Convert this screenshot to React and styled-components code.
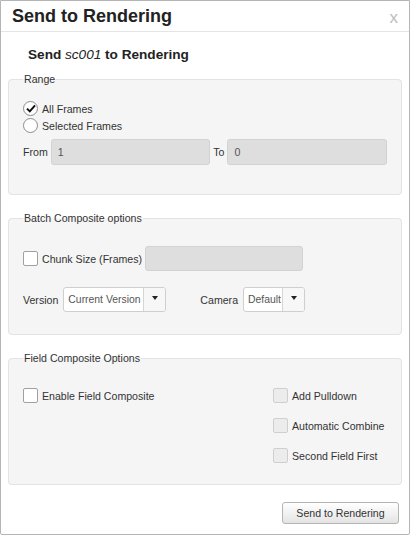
import React from 'react'
import styled, { createGlobalStyle } from 'styled-components'

const Global = createGlobalStyle`
  body {
    margin: 0;
    background: #fff;
    font-family: "Liberation Sans", Arial, sans-serif;
    color: #333;
  }
`

const Dialog = styled.div`
  width: 410px;
  box-sizing: border-box;
  border: 1px solid #b5b5b5;
  border-radius: 0 0 2px 2px;
  background: #fff;
`

const Header = styled.div`
  height: 31px;
  box-sizing: border-box;
  border-bottom: 1px solid #e5e5e5;
  display: flex;
  align-items: center;
  justify-content: space-between;
  padding: 0 11px 0 11px;
`

const Title = styled.h3`
  margin: 0;
  font-size: 18px;
  font-weight: bold;
  color: #222;
`

const Close = styled.span`
  font-size: 17px;
  color: #bdbdbd;
  line-height: 1;
  margin-top: 2px;
`

const Body = styled.div`
  padding: 0 7px 10px;
`

const Subtitle = styled.h4`
  margin: 13px 0 7px;
  padding-left: 20px;
  font-size: 13.6px;
  line-height: 20px;
  font-weight: bold;
  color: #222;

  em {
    font-weight: normal;
  }
`

const Group = styled.fieldset`
  margin: ${(p) => (p.$first ? '0' : '16px')} 0 0;
  padding: ${(p) => p.$pad};
  min-width: 0;
  border: 1px solid #e3e3e3;
  border-radius: 4px;
  background: #f5f5f5;
  font-size: 10.6px;
`

const Legend = styled.legend`
  padding: 0 1px;
  font-size: 10.6px;
  line-height: 14px;
  color: #333;
`

const OptionRow = styled.label`
  display: flex;
  align-items: center;
  gap: 4px;
  height: ${(p) => p.$h || 17}px;
  white-space: nowrap;
`

const RadioMark = styled.span`
  width: 15px;
  height: 15px;
  box-sizing: border-box;
  border: 1px solid #8c8c8c;
  border-radius: 50%;
  background: #fff;
  display: flex;
  align-items: center;
  justify-content: center;
  flex: none;
`

const Box = styled.span`
  width: 15px;
  height: 15px;
  box-sizing: border-box;
  border: 1px solid ${(p) => (p.$disabled ? '#cfcfcf' : '#a0a0a0')};
  border-radius: 2px;
  background: ${(p) => (p.$disabled ? '#ececec' : '#fff')};
  flex: none;
`

const FieldRow = styled.div`
  display: flex;
  align-items: center;
  gap: ${(p) => p.$gap || 4}px;
  margin-top: ${(p) => p.$mt || 0}px;
`

const Label = styled.span`
  margin-left: ${(p) => p.$ml || 0}px;
  white-space: nowrap;
`

const TextBox = styled.div`
  height: ${(p) => p.$h || 26}px;
  width: ${(p) => (p.$w ? `${p.$w}px` : 'auto')};
  flex: ${(p) => (p.$w ? 'none' : '1')};
  box-sizing: border-box;
  border: 1px solid #d2d2d2;
  border-radius: 3px;
  background: #dedede;
  color: #555;
  display: flex;
  align-items: center;
  padding: 0 6px;
`

const Select = styled.div`
  display: flex;
  width: ${(p) => p.$w}px;
  height: 25px;
  box-sizing: border-box;
  border: 1px solid #cfcfcf;
  border-radius: 3px;
  background: #fff;
  flex: none;
`

const SelectText = styled.span`
  flex: 1;
  display: flex;
  align-items: center;
  padding: 0 4px;
  color: #555;
  font-size: 10.4px;
  white-space: nowrap;
  overflow: hidden;
`

const Caret = styled.span`
  width: 21px;
  border-left: 1px solid #d5d5d5;
  background: #f7f7f7;
  border-radius: 0 2px 2px 0;
  display: flex;
  align-items: center;
  justify-content: center;

  &::after {
    content: '';
    border-left: 3.5px solid transparent;
    border-right: 3.5px solid transparent;
    border-top: 4px solid #222;
    margin-top: -3px;
  }
`

const Columns = styled.div`
  display: grid;
  grid-template-columns: 250px 1fr;
`

const Stack = styled.div`
  display: flex;
  flex-direction: column;
  gap: 15px;
`

const Footer = styled.div`
  display: flex;
  justify-content: flex-end;
  margin-top: 17px;
  padding-right: 3px;
`

const Button = styled.button`
  width: 117px;
  height: 22px;
  border: 1px solid #b4b4b4;
  border-radius: 3px;
  background: linear-gradient(#ffffff, #e4e4e4);
  font-family: inherit;
  font-size: 10.6px;
  color: #333;
  padding: 0;
`

function Radio({ checked, children }) {
  return (
    <OptionRow>
      <RadioMark>
        {checked && (
          <svg width="10" height="9" viewBox="0 0 10 9">
            <path d="M1 4.6 L3.8 7.4 L9 1.4" fill="none" stroke="#111" strokeWidth="2" />
          </svg>
        )}
      </RadioMark>
      {children}
    </OptionRow>
  )
}

function Check({ disabled, children, h }) {
  return (
    <OptionRow $h={h}>
      <Box $disabled={disabled} />
      {children}
    </OptionRow>
  )
}

export default function App() {
  return (
    <>
      <Global />
      <Dialog>
        <Header>
          <Title>Send to Rendering</Title>
          <Close>x</Close>
        </Header>
        <Body>
          <Subtitle>
            Send <em>sc001</em> to Rendering
          </Subtitle>

          <Group $first $pad="14px 14px 29px">
            <Legend>Range</Legend>
            <Radio checked>All Frames</Radio>
            <Radio>Selected Frames</Radio>
            <FieldRow $mt={5} $gap={3}>
              <Label>From</Label>
              <TextBox>1</TextBox>
              <Label>To</Label>
              <TextBox>0</TextBox>
            </FieldRow>
          </Group>

          <Group $pad="21px 14px 22px">
            <Legend>Batch Composite options</Legend>
            <FieldRow $gap={3}>
              <Check>Chunk Size (Frames)</Check>
              <TextBox $w={158} $h={25} />
            </FieldRow>
            <FieldRow $mt={16} $gap={5}>
              <Label>Version</Label>
              <Select $w={103}>
                <SelectText>Current Version</SelectText>
                <Caret />
              </Select>
              <Label $ml={29}>Camera</Label>
              <Select $w={62}>
                <SelectText>Default</SelectText>
                <Caret />
              </Select>
            </FieldRow>
          </Group>

          <Group $pad="23px 14px 21px">
            <Legend>Field Composite Options</Legend>
            <Columns>
              <div>
                <Check h={15}>Enable Field Composite</Check>
              </div>
              <Stack>
                <Check disabled h={15}>Add Pulldown</Check>
                <Check disabled h={15}>Automatic Combine</Check>
                <Check disabled h={15}>Second Field First</Check>
              </Stack>
            </Columns>
          </Group>

          <Footer>
            <Button>Send to Rendering</Button>
          </Footer>
        </Body>
      </Dialog>
    </>
  )
}
